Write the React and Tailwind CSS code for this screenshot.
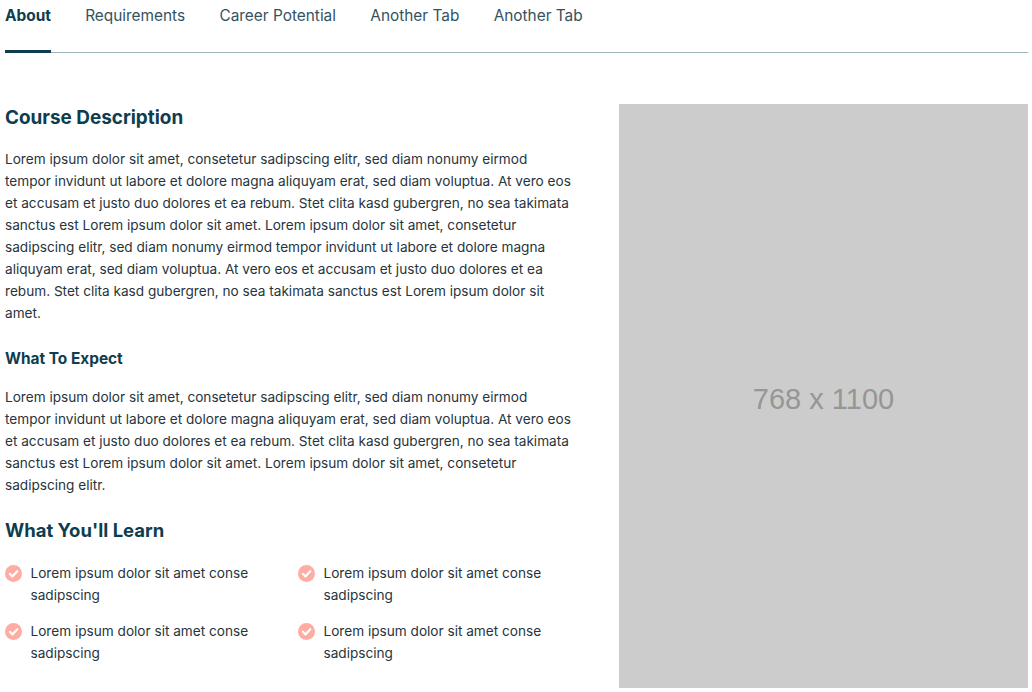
const tabs = ['About', 'Requirements', 'Career Potential', 'Another Tab', 'Another Tab'];

const LONG_TEXT = 'Lorem ipsum dolor sit amet, consetetur sadipscing elitr, sed diam nonumy eirmod tempor invidunt ut labore et dolore magna aliquyam erat, sed diam voluptua. At vero eos et accusam et justo duo dolores et ea rebum. Stet clita kasd gubergren, no sea takimata sanctus est Lorem ipsum dolor sit amet. Lorem ipsum dolor sit amet, consetetur sadipscing elitr, sed diam nonumy eirmod tempor invidunt ut labore et dolore magna aliquyam erat, sed diam voluptua. At vero eos et accusam et justo duo dolores et ea rebum. Stet clita kasd gubergren, no sea takimata sanctus est Lorem ipsum dolor sit amet.';

const SHORT_TEXT = 'Lorem ipsum dolor sit amet, consetetur sadipscing elitr, sed diam nonumy eirmod tempor invidunt ut labore et dolore magna aliquyam erat, sed diam voluptua. At vero eos et accusam et justo duo dolores et ea rebum. Stet clita kasd gubergren, no sea takimata sanctus est Lorem ipsum dolor sit amet. Lorem ipsum dolor sit amet, consetetur sadipscing elitr.';

const CheckBadge = () => (
	<svg className="mt-[3px] h-[17px] w-[17px] shrink-0" viewBox="0 0 17 17">
		<circle cx="8.5" cy="8.5" r="8.5" fill="#ffaca3" />
		<path d="M4.8 8.8l2.6 2.6 4.9-5.2" fill="none" stroke="#fff" strokeWidth="2.2" strokeLinecap="round" strokeLinejoin="round" />
	</svg>
);

const LearnItem = () => (
	<li className="flex gap-[8.5px]">
		<CheckBadge />
		<span>Lorem ipsum dolor sit amet conse sadipscing</span>
	</li>
);

const App = () => {
	return (
		<div className="h-[692px] overflow-hidden bg-white pl-[5px] pr-1 font-['Inter',sans-serif] text-[13.61px] leading-[22px] text-[#27343c]">
			<nav className="flex h-[53px] gap-[34.3px] border-b border-[#9db2bb]">
				{tabs.map((tab, index) => (
					<a
						key={index}
						className={index === 0
							? 'h-[53px] border-b-[3px] border-[#0f3d50] pt-[5px] text-[15.4px] font-bold text-[#0f3d50]'
							: 'h-[53px] pt-[5px] text-[15.4px] text-[#35525f]'}
					>
						{tab}
					</a>
				))}
			</nav>
			<div className="flex justify-between pt-[52px]">
				<div className="w-[570px]">
					<h2 className="text-[18.9px] leading-[26px] font-bold text-[#0f3d50]">Course Description</h2>
					<p className="mt-[17px]">{LONG_TEXT}</p>
					<h3 className="mt-[24px] text-[15.4px] leading-[22px] font-bold text-[#0f3d50]">What To Expect</h3>
					<p className="mt-[16px]">{SHORT_TEXT}</p>
					<h2 className="mt-[21px] text-[18.5px] leading-[26px] font-bold text-[#0f3d50]">What You'll Learn</h2>
					<ul className="mt-[19px] grid grid-cols-[293px_260px] gap-y-[14px]">
						<LearnItem />
						<LearnItem />
						<LearnItem />
						<LearnItem />
					</ul>
				</div>
				<div className="-mt-px flex h-[584px] w-[409px] items-center justify-center bg-[#cccccc] pt-[6px] font-['Liberation_Sans',sans-serif] text-[29px] text-[#969696]">
					768 x 1100
				</div>
			</div>
		</div>
	);
};

export default App;
